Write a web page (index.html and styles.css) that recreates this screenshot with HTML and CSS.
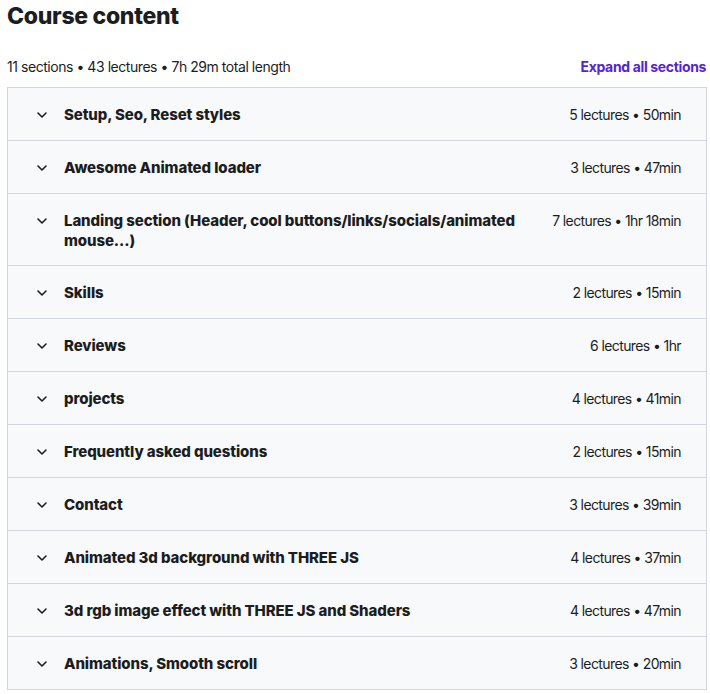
FILE: index.html
```html
<!DOCTYPE html>
<html>
<head>
<meta charset="utf-8">
<link rel="stylesheet" href="styles.css">
</head>
<body>
<div class="page">
  <h2 class="title">Course content</h2>
  <div class="summary">
    <span class="stats">11 sections • 43 lectures • 7h 29m total length</span>
    <button class="expand">Expand all sections</button>
  </div>
  <div class="sections">
    <div class="row"><svg class="chev" viewBox="0 0 10 6"><path d="M1 1 5 5 9 1"/></svg><span class="name">Setup, Seo, Reset styles</span><span class="meta">5 lectures • 50min</span></div>
    <div class="row"><svg class="chev" viewBox="0 0 10 6"><path d="M1 1 5 5 9 1"/></svg><span class="name">Awesome Animated loader</span><span class="meta">3 lectures • 47min</span></div>
    <div class="row"><svg class="chev" viewBox="0 0 10 6"><path d="M1 1 5 5 9 1"/></svg><span class="name">Landing section (Header, cool buttons/links/socials/animated mouse...)</span><span class="meta">7 lectures • 1hr 18min</span></div>
    <div class="row"><svg class="chev" viewBox="0 0 10 6"><path d="M1 1 5 5 9 1"/></svg><span class="name">Skills</span><span class="meta">2 lectures • 15min</span></div>
    <div class="row"><svg class="chev" viewBox="0 0 10 6"><path d="M1 1 5 5 9 1"/></svg><span class="name">Reviews</span><span class="meta">6 lectures • 1hr</span></div>
    <div class="row"><svg class="chev" viewBox="0 0 10 6"><path d="M1 1 5 5 9 1"/></svg><span class="name">projects</span><span class="meta">4 lectures • 41min</span></div>
    <div class="row"><svg class="chev" viewBox="0 0 10 6"><path d="M1 1 5 5 9 1"/></svg><span class="name">Frequently asked questions</span><span class="meta">2 lectures • 15min</span></div>
    <div class="row"><svg class="chev" viewBox="0 0 10 6"><path d="M1 1 5 5 9 1"/></svg><span class="name">Contact</span><span class="meta">3 lectures • 39min</span></div>
    <div class="row"><svg class="chev" viewBox="0 0 10 6"><path d="M1 1 5 5 9 1"/></svg><span class="name">Animated 3d background with THREE JS</span><span class="meta">4 lectures • 37min</span></div>
    <div class="row"><svg class="chev" viewBox="0 0 10 6"><path d="M1 1 5 5 9 1"/></svg><span class="name">3d rgb image effect with THREE JS and Shaders</span><span class="meta">4 lectures • 47min</span></div>
    <div class="row"><svg class="chev" viewBox="0 0 10 6"><path d="M1 1 5 5 9 1"/></svg><span class="name">Animations, Smooth scroll</span><span class="meta">3 lectures • 20min</span></div>
  </div>
</div>
</body>
</html>
```
FILE: styles.css
```css
* { box-sizing: border-box; }
html, body { margin: 0; padding: 0; background: #fff; }
body {
  font-family: Inter, "Noto Sans", sans-serif;
  color: #1c1d1f;
}
.page {
  width: 700px;
  margin-left: 7px;
}
.title {
  margin: 0;
  padding-top: 2px;
  font-size: 23px;
  line-height: 29px;
  font-weight: 800;
  color: #1c1d1f;
  letter-spacing: -0.3px;
}
.summary {
  display: flex;
  justify-content: space-between;
  align-items: baseline;
  margin-top: 26px;
  margin-bottom: 10px;
  margin-right: 1px;
  line-height: 20px;
}
.stats {
  font-size: 14px;
  color: #1c1d1f;
  letter-spacing: -0.45px;
}
.expand {
  border: 0;
  background: none;
  padding: 0;
  font-family: inherit;
  font-size: 14px;
  font-weight: 700;
  color: #5624d0;
  letter-spacing: -0.35px;
}
.sections {
  border: 1px solid #d1d7dc;
  border-bottom: 0;
}
.row {
  display: flex;
  align-items: flex-start;
  background: #f7f9fa;
  border-bottom: 1px solid #d1d7dc;
  padding: 17px 25px 15px 29px;
}
.chev {
  flex: none;
  width: 10px;
  height: 6px;
  margin-top: 7px;
  margin-right: 17px;
  fill: none;
  stroke: #1c1d1f;
  stroke-width: 1.6;
  stroke-linecap: round;
  stroke-linejoin: round;
}
.name {
  flex: 1;
  font-size: 15px;
  font-weight: 800;
  line-height: 19.5px;
  letter-spacing: -0.1px;
  color: #1c1d1f;
  padding-right: 24px;
}
.meta {
  flex: none;
  font-size: 14px;
  line-height: 20px;
  letter-spacing: -0.6px;
  color: #1c1d1f;
}
```
